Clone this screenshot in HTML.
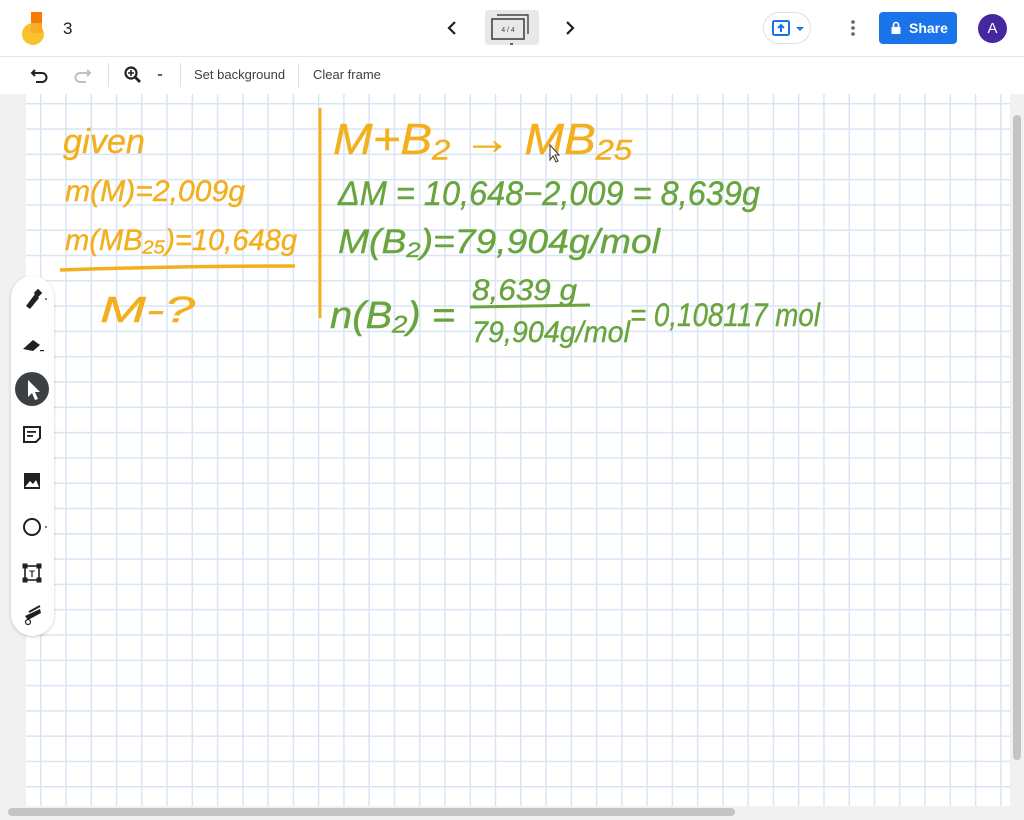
<!DOCTYPE html>
<html><head><meta charset="utf-8"><style>
*{margin:0;padding:0;box-sizing:border-box}
body{width:1024px;height:820px;overflow:hidden;background:#f1f1f1;font-family:"Liberation Sans",sans-serif;position:relative}
.hdr{position:absolute;left:0;top:0;width:1024px;height:57px;background:#fff;border-bottom:1px solid #e6e6e6}
.tb{position:absolute;left:0;top:57px;width:1024px;height:37px;background:#fff}
.canvas{position:absolute;left:26px;top:94px;width:984px;height:712px;background-color:#fff;
background-image:linear-gradient(to right,#d9e4f4 1.3px,transparent 1.3px),linear-gradient(to bottom,#d9e4f4 1.3px,transparent 1.3px);
background-size:25.27px 25.3px;background-position:14px 9px}
.abs{position:absolute}
.tt{font-size:13px;color:#3c4043}
.div{position:absolute;top:63px;width:1px;height:24px;background:#e0e0e0}
.side{position:absolute;left:11px;top:276px;width:43px;height:360px;background:#fff;border-radius:22px;box-shadow:0 1px 3px rgba(0,0,0,.2)}
</style></head><body>
<div class="hdr"></div>
<svg class="abs" style="left:18px;top:10px" width="30" height="36"><rect x="13" y="2" width="11" height="11" fill="#f57c00"/><rect x="13" y="13" width="11" height="10" fill="#f9a825"/><circle cx="15" cy="24" r="11" fill="#fbc02d"/><rect x="13" y="13" width="11" height="10" fill="#f9a825" opacity=".8"/></svg>
<div class="abs" style="left:63px;top:19px;font-size:17px;color:#202124">3</div>
<svg class="abs" style="left:444px;top:19px" width="16" height="18"><path d="M11 3 L5 9 L11 15" stroke="#202124" stroke-width="2.2" fill="none"/></svg>
<div class="abs" style="left:485px;top:10px;width:54px;height:35px;background:#e8e8e8;border-radius:3px"></div>
<svg class="abs" style="left:485px;top:10px" width="54" height="36"><path d="M12 5 H43 V24" stroke="#444" stroke-width="1.4" fill="none"/><rect x="7" y="9" width="32" height="20" fill="#e8e8e8" stroke="#444" stroke-width="1.6"/><text x="23" y="22" font-size="7" text-anchor="middle" fill="#444" font-family="Liberation Sans">4 / 4</text><rect x="25" y="33" width="3" height="2" fill="#666"/></svg>
<svg class="abs" style="left:562px;top:19px" width="16" height="18"><path d="M5 3 L11 9 L5 15" stroke="#202124" stroke-width="2.2" fill="none"/></svg>
<div class="abs" style="left:763px;top:12px;width:48px;height:32px;border:1px solid #e0e0e0;border-radius:16px;background:#fff"></div>
<svg class="abs" style="left:771px;top:19px" width="36" height="18"><rect x="2" y="2" width="16" height="14" rx="1.5" fill="none" stroke="#1a73e8" stroke-width="2"/><path d="M10 13 V6 M7 9 L10 6 L13 9" stroke="#1a73e8" stroke-width="2" fill="none"/><path d="M25 8 L33 8 L29 12Z" fill="#1a73e8"/></svg>
<svg class="abs" style="left:848px;top:18px" width="10" height="20"><circle cx="5" cy="4" r="1.8" fill="#5f6368"/><circle cx="5" cy="10" r="1.8" fill="#5f6368"/><circle cx="5" cy="16" r="1.8" fill="#5f6368"/></svg>
<div class="abs" style="left:879px;top:12px;width:78px;height:32px;background:#1a73e8;border-radius:4px;color:#fff;font-size:14px;font-weight:bold;line-height:32px;padding-left:30px">Share</div>
<svg class="abs" style="left:890px;top:21px" width="12" height="14"><rect x="1.5" y="6" width="9" height="7" rx="1" fill="#fff"/><path d="M3.5 6 V4 a2.5 2.5 0 0 1 5 0 V6" stroke="#fff" stroke-width="1.6" fill="none"/></svg>
<div class="abs" style="left:978px;top:14px;width:29px;height:29px;border-radius:50%;background:#4527a0;color:#fff;font-size:15px;text-align:center;line-height:29px">A</div>

<div class="tb"></div>
<svg class="abs" style="left:30px;top:66px" width="20" height="18"><path d="M5 4 L2 7 L5 10 M2 7 H12 a4.5 4.5 0 0 1 0 9 H6" stroke="#202124" stroke-width="2" fill="none"/></svg>
<svg class="abs" style="left:72px;top:66px" width="20" height="18"><path d="M15 4 L18 7 L15 10 M18 7 H8 a4.5 4.5 0 0 0 0 9 H14" stroke="#bdc1c6" stroke-width="2" fill="none"/></svg>
<div class="div" style="left:108px"></div>
<svg class="abs" style="left:123px;top:65px" width="20" height="20"><circle cx="8" cy="8" r="5.5" stroke="#202124" stroke-width="2.2" fill="none"/><path d="M12 12 L17 17" stroke="#202124" stroke-width="2.8"/><path d="M8 5 V11 M5 8 H11" stroke="#202124" stroke-width="1.6"/></svg>
<div class="abs" style="left:158px;top:74px;width:4px;height:1.5px;background:#5f6368"></div>
<div class="div" style="left:180px"></div>
<div class="abs tt" style="left:194px;top:67px">Set background</div>
<div class="div" style="left:298px"></div>
<div class="abs tt" style="left:313px;top:67px">Clear frame</div>

<div class="canvas"></div>
<div class="abs" style="left:1012px;top:96px;width:10px;height:710px;background:#f1f1f1"></div>
<div class="abs" style="left:1013px;top:115px;width:8px;height:645px;background:#c4c4c4;border-radius:4px"></div>
<div class="abs" style="left:8px;top:808px;width:727px;height:8px;background:#c4c4c4;border-radius:4px"></div>

<svg class="abs" style="left:0;top:0" width="1024" height="820" font-family="Liberation Sans,sans-serif" font-style="italic">
<g fill="#f2b01e" stroke="#f2b01e" stroke-width="0.4">
<text x="63" y="153" font-size="34" textLength="82" lengthAdjust="spacingAndGlyphs">given</text>
<text x="65" y="201" font-size="30" textLength="180" lengthAdjust="spacingAndGlyphs">m(M)=2,009g</text>
<text x="65" y="250" font-size="30" textLength="232" lengthAdjust="spacingAndGlyphs">m(MB₂₅)=10,648g</text>
<text x="100" y="322" font-size="36" textLength="95" lengthAdjust="spacingAndGlyphs">M-?</text>
<text x="333" y="154" font-size="44" textLength="300" lengthAdjust="spacingAndGlyphs">M+B₂ → MB₂₅</text>
</g>
<path d="M60 270 Q180 266 295 266" stroke="#f2b01e" stroke-width="3.5" fill="none"/>
<path d="M320 108 L320 318" stroke="#f2b01e" stroke-width="3" fill="none"/>
<g fill="#69a53f" stroke="#69a53f" stroke-width="0.4">
<text x="338" y="205" font-size="34" textLength="422" lengthAdjust="spacingAndGlyphs">ΔM = 10,648−2,009 = 8,639g</text>
<text x="338" y="253" font-size="34" textLength="322" lengthAdjust="spacingAndGlyphs">M(B₂)=79,904g/mol</text>
<text x="330" y="328" font-size="38" textLength="125" lengthAdjust="spacingAndGlyphs">n(B₂) =</text>
<text x="472" y="300" font-size="30" textLength="105" lengthAdjust="spacingAndGlyphs">8,639 g</text>
<text x="472" y="342" font-size="30" textLength="158" lengthAdjust="spacingAndGlyphs">79,904g/mol</text>
<text x="630" y="326" font-size="32" textLength="190" lengthAdjust="spacingAndGlyphs">= 0,108117 mol</text>
</g>
<path d="M470 307 L590 305" stroke="#69a53f" stroke-width="3" fill="none"/>
<path d="M550 145 L550 160 L553 156 L556 162 L558 161 L555 155 L559 155 Z" fill="#fff" stroke="#333" stroke-width="1"/>
</svg>

<div class="side"></div>
<svg class="abs" style="left:11px;top:276px" width="43" height="360">
<g fill="#202124">
<path d="M15 30 L24 18 L28 22 L19 33 Z"/><rect x="24" y="14" width="6" height="6" transform="rotate(45 27 17)"/><circle cx="35" cy="23" r=".9"/>
<path d="M12 73 L22 64 L29 69 L22 75 Z"/><rect x="29" y="74" width="4" height="1.2"/>
<circle cx="21" cy="113" r="17" fill="#3c4043"/>
<path d="M17 104 L17 121 L21 117 L24 124 L27 123 L24 116 L29 116 Z" fill="#fff"/>
<path d="M13 151 H29 V162 L25 166 H13 Z" fill="none" stroke="#202124" stroke-width="2"/><rect x="16" y="155" width="9" height="1.8"/><rect x="16" y="159" width="6" height="1.8"/>
<rect x="13" y="197" width="16" height="16"/><path d="M14 211 L19 205 L22 208 L25 204 L28 211Z" fill="#fff"/>
<circle cx="21" cy="251" r="8" fill="none" stroke="#202124" stroke-width="2"/><circle cx="35" cy="251" r=".9"/>
<rect x="14" y="290" width="14" height="14" fill="none" stroke="#202124" stroke-width="1.6"/><rect x="11.5" y="287.5" width="5" height="5"/><rect x="25.5" y="287.5" width="5" height="5"/><rect x="11.5" y="301.5" width="5" height="5"/><rect x="25.5" y="301.5" width="5" height="5"/><text x="21" y="301" font-size="9" font-weight="bold" text-anchor="middle" font-family="Liberation Sans">T</text>
<path d="M14 340 L29 333 L30 337 L17 344 Z"/><path d="M18 336 L29 330" stroke="#202124" stroke-width="2"/><circle cx="17" cy="346" r="2.5" fill="none" stroke="#202124" stroke-width="1.2"/>
</g></svg>
</body></html>
